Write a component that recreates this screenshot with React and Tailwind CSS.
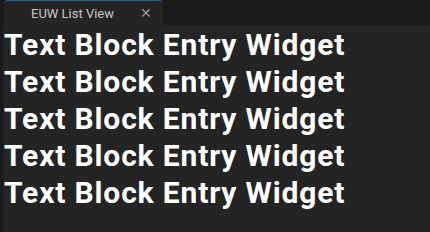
const rows = Array.from({ length: 5 }, () => 'Text Block Entry Widget')

const App = () => {
  return (
    <div className="w-[430px] h-[232px] bg-[#1a1a1a] flex flex-col overflow-hidden" style={{ fontFamily: 'Roboto, sans-serif' }}>
      <div className="h-[25px] flex shrink-0">
        <div className="ml-[4px] w-[159px] h-[25px] bg-[#242424] rounded-t-[4px] border-t border-[#1f5fae] flex items-center">
          <span className="ml-[27px] text-[13px] text-[#c8c8c8] leading-none">EUW List View</span>
          <span className="ml-auto mr-[11px] text-[14px] text-[#9a9a9a] leading-none">✕</span>
        </div>
      </div>
      <div className="flex-1 ml-[3px] bg-[#242424] pl-[1px] pt-[1px]">
        {rows.map((text, index) => (
          <div key={index} className="text-[30px] leading-[37px] tracking-[0.85px] font-bold text-white whitespace-nowrap">
            {text}
          </div>
        ))}
      </div>
    </div>
  )
}

export default App
